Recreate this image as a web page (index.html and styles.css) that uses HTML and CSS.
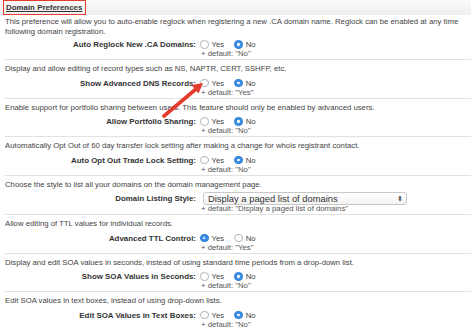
FILE: index.html
```html
<!DOCTYPE html>
<html>
<head>
<meta charset="utf-8">
<link rel="stylesheet" href="styles.css">
</head>
<body>
<div class="page">
  <div class="header"><span class="title">Domain Preferences</span></div>

  <div class="section first">
    <p class="desc">This preference will allow you to auto-enable reglock when registering a new .CA domain name. Reglock can be enabled at any time<br>following domain registration.</p>
    <div class="row">
      <div class="label">Auto Reglock New .CA Domains:</div>
      <div class="value">
        <div class="radios"><span class="radio"></span><span class="opt">Yes</span><span class="radio on"></span><span class="opt">No</span></div>
        <div class="default">+ default: "No"</div>
      </div>
    </div>
  </div>

  <div class="section">
    <p class="desc">Display and allow editing of record types such as NS, NAPTR, CERT, SSHFP, etc.</p>
    <div class="row">
      <div class="label">Show Advanced DNS Records:</div>
      <div class="value">
        <div class="radios"><span class="radio"></span><span class="opt">Yes</span><span class="radio on"></span><span class="opt">No</span></div>
        <div class="default">+ default: "Yes"</div>
      </div>
    </div>
  </div>

  <div class="section">
    <p class="desc">Enable support for portfolio sharing between users. This feature should only be enabled by advanced users.</p>
    <div class="row">
      <div class="label">Allow Portfolio Sharing:</div>
      <div class="value">
        <div class="radios"><span class="radio"></span><span class="opt">Yes</span><span class="radio on"></span><span class="opt">No</span></div>
        <div class="default">+ default: "No"</div>
      </div>
    </div>
  </div>

  <div class="section">
    <p class="desc">Automatically Opt Out of 60 day transfer lock setting after making a change for whois registrant contact.</p>
    <div class="row">
      <div class="label">Auto Opt Out Trade Lock Setting:</div>
      <div class="value">
        <div class="radios"><span class="radio"></span><span class="opt">Yes</span><span class="radio on"></span><span class="opt">No</span></div>
        <div class="default">+ default: "No"</div>
      </div>
    </div>
  </div>

  <div class="section">
    <p class="desc">Choose the style to list all your domains on the domain management page.</p>
    <div class="row">
      <div class="label">Domain Listing Style:</div>
      <div class="value">
        <div class="select"><span>Display a paged list of domains</span><span class="arrows">&#x2B0D;</span></div>
        <div class="default">+ default: "Display a paged list of domains"</div>
      </div>
    </div>
  </div>

  <div class="section">
    <p class="desc">Allow editing of TTL values for individual records.</p>
    <div class="row">
      <div class="label">Advanced TTL Control:</div>
      <div class="value">
        <div class="radios"><span class="radio on"></span><span class="opt">Yes</span><span class="radio"></span><span class="opt">No</span></div>
        <div class="default">+ default: "Yes"</div>
      </div>
    </div>
  </div>

  <div class="section">
    <p class="desc">Display and edit SOA values in seconds, instead of using standard time periods from a drop-down list.</p>
    <div class="row">
      <div class="label">Show SOA Values in Seconds:</div>
      <div class="value">
        <div class="radios"><span class="radio"></span><span class="opt">Yes</span><span class="radio on"></span><span class="opt">No</span></div>
        <div class="default">+ default: "No"</div>
      </div>
    </div>
  </div>

  <div class="section">
    <p class="desc">Edit SOA values in text boxes, instead of using drop-down lists.</p>
    <div class="row">
      <div class="label">Edit SOA Values in Text Boxes:</div>
      <div class="value">
        <div class="radios"><span class="radio"></span><span class="opt">Yes</span><span class="radio on"></span><span class="opt">No</span></div>
        <div class="default">+ default: "No"</div>
      </div>
    </div>
  </div>
</div>

<div class="annot-box"></div>
<svg class="annot-arrow" width="474" height="331" viewBox="0 0 474 331">
  <line x1="164" y1="116" x2="196" y2="89" stroke="#e33b2c" stroke-width="3.6" stroke-linecap="round"/>
  <polygon points="203,83 198.5,93.5 191.5,85" fill="#e33b2c"/>
</svg>
</body>
</html>
```
FILE: styles.css
```css
html, body {
  margin: 0;
  padding: 0;
  background: #ffffff;
}

body {
  font-family: "Liberation Sans", Arial, sans-serif;
  font-size: 7.75px;
  color: #3a3a3a;
  width: 474px;
  height: 331px;
  overflow: hidden;
  position: relative;
}

.page {
  width: 466px;
  margin-left: 5px;
}

.header {
  height: 15px;
  display: flex;
  align-items: center;
  background: linear-gradient(#fbfbfb, #eeeeee);
  margin-left: -5px;
  padding-left: 6px;
}

.title {
  font-weight: bold;
  text-decoration: underline;
  color: #333;
  font-size: 7.9px;
}

.section {
  padding: 4px 0 1px;
  border-bottom: 1.5px solid #e2e2e2;
}

.section:last-child {
  border-bottom: none;
}

.section.first {
  padding-top: 2px;
}

.desc {
  margin: 0 0 4px;
  line-height: 9.5px;
  color: #444;
}

.section.first .desc {
  margin-bottom: 3px;
}

.row {
  display: grid;
  grid-template-columns: 191px 1fr;
  column-gap: 3px;
}

.label {
  text-align: right;
  font-weight: bold;
  color: #333;
  line-height: 11px;
  font-size: 7.9px;
}

.value {
  display: flex;
  flex-direction: column;
}

.radios {
  display: flex;
  align-items: center;
  height: 11px;
  padding-left: 1px;
}

.radio {
  width: 6.5px;
  height: 6.5px;
  border-radius: 50%;
  border: 0.6px solid #b5b5b5;
  background: #fff;
  margin-right: 3px;
  box-sizing: content-box;
}

.radio.on {
  background: #3d8fe5;
  border-color: #2f7fd6;
  position: relative;
}

.radio.on::after {
  content: "";
  position: absolute;
  width: 2.3px;
  height: 2.3px;
  border-radius: 50%;
  background: #fff;
  left: 2.1px;
  top: 2.1px;
}

.opt {
  margin-right: 10px;
  color: #444;
}

.default {
  line-height: 8px;
  color: #555;
  padding-left: 2px;
}

.select {
  width: 204px;
  height: 13px;
  box-sizing: border-box;
  border: 1px solid #c8c8c8;
  border-radius: 3px;
  background: linear-gradient(#ffffff, #f3f3f3);
  display: flex;
  align-items: center;
  justify-content: space-between;
  padding: 0 3px 0 4px;
  margin-left: 4px;
  font-size: 9.4px;
  color: #333;
  margin-top: -1px;
}

.arrows {
  font-size: 7px;
  color: #555;
}

.annot-box {
  position: absolute;
  left: 3px;
  top: 0px;
  width: 83px;
  height: 15px;
  border: 1.8px solid #e33b2c;
  box-sizing: border-box;
}

.annot-arrow {
  position: absolute;
  left: 0;
  top: 0;
  pointer-events: none;
}
```
